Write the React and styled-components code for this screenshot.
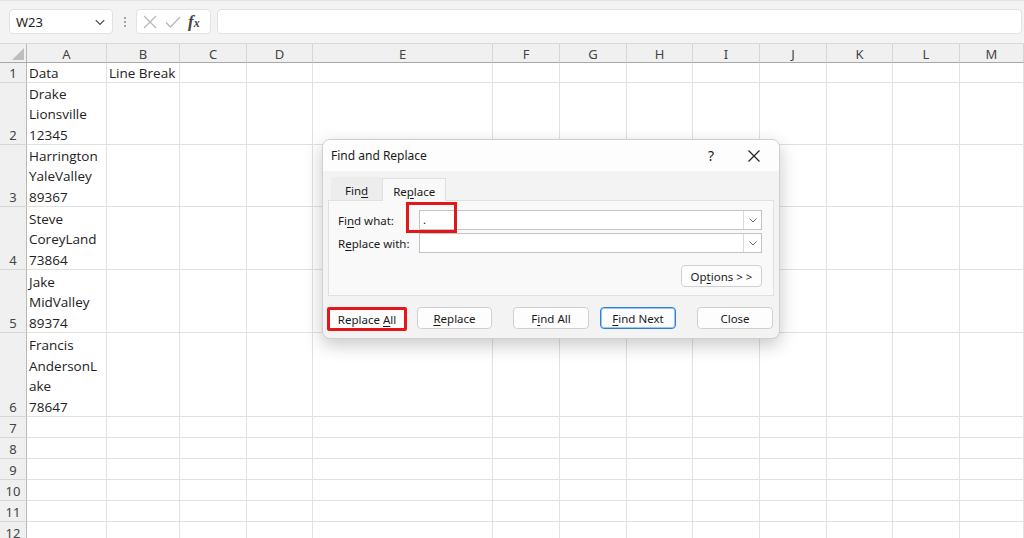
import React from "react";
import styled, { createGlobalStyle, css } from "styled-components";

const GlobalStyle = createGlobalStyle`
  html, body {
    margin: 0;
    padding: 0;
    background: #ffffff;
  }
  body {
    font-family: "Noto Sans", "Open Sans", sans-serif;
    color: #1f1f1f;
  }
`;

const columns = [
  { name: "A", width: 80 },
  { name: "B", width: 73 },
  { name: "C", width: 67 },
  { name: "D", width: 66 },
  { name: "E", width: 180 },
  { name: "F", width: 67 },
  { name: "G", width: 67 },
  { name: "H", width: 66 },
  { name: "I", width: 67 },
  { name: "J", width: 67 },
  { name: "K", width: 66 },
  { name: "L", width: 67 },
  { name: "M", width: 64 },
];

const rows = [
  { n: 1, h: 20, a: ["Data"], b: "Line Break" },
  { n: 2, h: 62, a: ["Drake", "Lionsville", "12345"] },
  { n: 3, h: 62, a: ["Harrington", "YaleValley", "89367"] },
  { n: 4, h: 63, a: ["Steve", "CoreyLand", "73864"] },
  { n: 5, h: 63, a: ["Jake", "MidValley", "89374"] },
  { n: 6, h: 84, a: ["Francis", "AndersonL", "ake", "78647"] },
  { n: 7, h: 21 },
  { n: 8, h: 21 },
  { n: 9, h: 21 },
  { n: 10, h: 21 },
  { n: 11, h: 21 },
  { n: 12, h: 21 },
];

const gridCols = `27px ${columns.map((c) => c.width + "px").join(" ")}`;

const Chevron = ({ size = 10, color = "#666" }) => (
  <svg width={size} height={size} viewBox="0 0 10 10">
    <path d="M1.5 3.5 L5 7 L8.5 3.5" fill="none" stroke={color} strokeWidth="1" />
  </svg>
);

const App = () => {
  return (
    <>
      <GlobalStyle />
      <Page>
        <FormulaBar>
          <NameBox>
            <span>W23</span>
            <Chevron size={12} color="#444" />
          </NameBox>
          <Dots>
            <i />
            <i />
            <i />
          </Dots>
          <FxBox>
            <svg width="16" height="16" viewBox="0 0 16 16">
              <path d="M2 2 L14 14 M14 2 L2 14" stroke="#b9b9b9" strokeWidth="1.3" fill="none" />
            </svg>
            <svg width="18" height="16" viewBox="0 0 18 16">
              <path d="M2 8.5 L6.5 13 L16 3" stroke="#b9b9b9" strokeWidth="1.3" fill="none" />
            </svg>
            <FxText>
              f<sub>x</sub>
            </FxText>
          </FxBox>
          <FormulaInput />
        </FormulaBar>

        <Sheet>
          <Grid>
            <Corner>
              <svg width="12" height="12" viewBox="0 0 12 12">
                <path d="M12 0 L12 12 L0 12 Z" fill="#bdbdbd" />
              </svg>
            </Corner>
            {columns.map((c) => (
              <ColHead key={c.name}>{c.name}</ColHead>
            ))}
            {rows.map((r) => (
              <React.Fragment key={r.n}>
                <RowHead $h={r.h}>
                  <Line>{r.n}</Line>
                </RowHead>
                {columns.map((c, i) => (
                  <Cell key={c.name} $h={r.h}>
                    {i === 0 && r.a && r.a.map((line) => <Line key={line}>{line}</Line>)}
                    {i === 1 && r.b && <Line>{r.b}</Line>}
                  </Cell>
                ))}
              </React.Fragment>
            ))}
          </Grid>

          <Dialog>
            <TitleBar>
              <Title>Find and Replace</Title>
              <TitleButtons>
                <Help>?</Help>
                <svg width="14" height="14" viewBox="0 0 14 14">
                  <path d="M1.5 1.5 L12.5 12.5 M12.5 1.5 L1.5 12.5" stroke="#222" strokeWidth="1.2" fill="none" />
                </svg>
              </TitleButtons>
            </TitleBar>
            <DialogBody>
              <Tabs>
                <Tab>
                  <span>
                    Fin<u>d</u>
                  </span>
                </Tab>
                <Tab $active>
                  <span>
                    Re<u>p</u>lace
                  </span>
                </Tab>
              </Tabs>
              <Panel>
                <FieldRow>
                  <Label>
                    Fi<u>n</u>d what:
                  </Label>
                  <ComboBox>
                    <ComboText>.</ComboText>
                    <ComboArrow>
                      <Chevron />
                    </ComboArrow>
                  </ComboBox>
                  <Highlight />
                </FieldRow>
                <FieldRow>
                  <Label>
                    R<u>e</u>place with:
                  </Label>
                  <ComboBox>
                    <ComboText />
                    <ComboArrow>
                      <Chevron />
                    </ComboArrow>
                  </ComboBox>
                </FieldRow>
                <OptionsRow>
                  <Button $w={81}>
                    <span>
                      Op<u>t</u>ions &gt; &gt;
                    </span>
                  </Button>
                </OptionsRow>
              </Panel>
              <ButtonRow>
                <Button $w={80} $highlight>
                  <span>
                    Replace <u>A</u>ll
                  </span>
                </Button>
                <Button $w={75} $gap={10}>
                  <span>
                    <u>R</u>eplace
                  </span>
                </Button>
                <Button $w={76} $gap={21}>
                  <span>
                    F<u>i</u>nd All
                  </span>
                </Button>
                <Button $w={76} $gap={11} $focused>
                  <span>
                    <u>F</u>ind Next
                  </span>
                </Button>
                <Button $w={76} $gap={21}>
                  <span>Close</span>
                </Button>
              </ButtonRow>
            </DialogBody>
          </Dialog>
        </Sheet>
      </Page>
    </>
  );
};

const Page = styled.div`
  width: 1024px;
  height: 538px;
  overflow: hidden;
  display: flex;
  flex-direction: column;
  background: #ffffff;
`;

const FormulaBar = styled.div`
  height: 44px;
  flex-shrink: 0;
  box-sizing: border-box;
  background: #f3f3f3;
  border-top: 1px solid #e3e3e3;
  border-bottom: 1px solid #d9d9d9;
  display: flex;
  align-items: center;
  padding: 0 2px 1px 9px;
`;

const NameBox = styled.div`
  width: 104px;
  height: 25px;
  box-sizing: border-box;
  background: #ffffff;
  border: 1px solid #e2e2e2;
  border-radius: 4px;
  display: flex;
  align-items: center;
  justify-content: space-between;
  padding: 0 6px 0 6px;
  font-size: 13px;
  color: #222;
`;

const Dots = styled.div`
  width: 23px;
  display: flex;
  flex-direction: column;
  align-items: center;
  gap: 2px;

  i {
    width: 2px;
    height: 2px;
    border-radius: 50%;
    background: #8a8a8a;
  }
`;

const FxBox = styled.div`
  width: 75px;
  height: 25px;
  box-sizing: border-box;
  background: #ffffff;
  border: 1px solid #e2e2e2;
  border-radius: 4px;
  display: flex;
  align-items: center;
  gap: 6px;
  padding-left: 5px;
`;

const FxText = styled.span`
  font-family: "Liberation Serif", serif;
  font-style: italic;
  font-weight: bold;
  font-size: 17px;
  color: #444;
  line-height: 1;

  sub {
    font-size: 12px;
    vertical-align: baseline;
  }
`;

const FormulaInput = styled.div`
  flex: 1;
  margin-left: 6px;
  height: 25px;
  box-sizing: border-box;
  background: #ffffff;
  border: 1px solid #e2e2e2;
  border-radius: 4px;
`;

const Sheet = styled.div`
  position: relative;
  flex: 1;
  min-height: 0;
`;

const Grid = styled.div`
  display: grid;
  grid-template-columns: ${gridCols};
  grid-auto-rows: min-content;
`;

const headCell = css`
  background: #f0f0f0;
  box-sizing: border-box;
  color: #444;
  font-size: 13px;
  display: flex;
  justify-content: center;
`;

const Corner = styled.div`
  ${headCell};
  height: 19px;
  align-items: flex-end;
  justify-content: flex-end;
  padding: 0 2px 2px 0;
  border-right: 1px solid #b8b8b8;
  border-bottom: 1px solid #a8a8a8;
`;

const ColHead = styled.div`
  ${headCell};
  height: 19px;
  align-items: center;
  padding-top: 1px;
  border-right: 1px solid #d6d6d6;
  border-bottom: 1px solid #a8a8a8;
`;

const RowHead = styled.div`
  ${headCell};
  height: ${(p) => p.$h}px;
  flex-direction: column;
  align-items: center;
  justify-content: flex-end;
  border-right: 1px solid #b8b8b8;
  border-bottom: 1px solid #d6d6d6;
`;

const Cell = styled.div`
  height: ${(p) => p.$h}px;
  box-sizing: border-box;
  border-right: 1px solid #e1e1e1;
  border-bottom: 1px solid #e1e1e1;
  display: flex;
  flex-direction: column;
  justify-content: flex-end;
  padding-left: 2px;
  overflow: visible;
  white-space: nowrap;
  font-family: "Open Sans", sans-serif;
  font-size: 13.5px;
  color: #222;
`;

const Line = styled.div`
  line-height: 20.8px;
  transform: translateY(2px);
`;

const Dialog = styled.div`
  position: absolute;
  left: 322px;
  top: 95px;
  width: 458px;
  height: 200px;
  box-sizing: border-box;
  background: #f3f3f3;
  border: 1px solid #cfcfcf;
  border-radius: 8px;
  box-shadow: 0 6px 18px rgba(0, 0, 0, 0.22);
  overflow: hidden;
  display: flex;
  flex-direction: column;
  font-family: "Noto Sans", "Open Sans", sans-serif;
  font-size: 11.5px;
  color: #1a1a1a;

  u {
    text-decoration-thickness: 1px;
    text-underline-offset: 2px;
  }
`;

const TitleBar = styled.div`
  height: 31px;
  background: #fdfdfd;
  display: flex;
  align-items: center;
  justify-content: space-between;
  padding: 0 18px 0 8px;
  flex-shrink: 0;
`;

const Title = styled.div`
  font-size: 12px;
`;

const TitleButtons = styled.div`
  display: flex;
  align-items: center;
  gap: 33px;
`;

const Help = styled.div`
  font-size: 14px;
`;

const DialogBody = styled.div`
  padding: 6px 5px 0 5px;
  display: flex;
  flex-direction: column;
`;

const Tabs = styled.div`
  display: flex;
  padding-left: 3px;
  height: 23px;
`;

const Tab = styled.div`
  box-sizing: border-box;
  height: 23px;
  padding: 2px ${(p) => (p.$active ? "10px" : "13px")} 0;
  display: flex;
  align-items: center;
  background: ${(p) => (p.$active ? "#f9f9f9" : "#ededed")};
  border: 1px solid ${(p) => (p.$active ? "#e0e0e0" : "transparent")};
  border-bottom: none;
  position: relative;
  top: ${(p) => (p.$active ? "1px" : "0")};
  z-index: ${(p) => (p.$active ? 1 : 0)};
`;

const Panel = styled.div`
  height: 96px;
  box-sizing: border-box;
  background: #f9f9f9;
  border: 1px solid #e0e0e0;
  padding: 9px 11px 0 9px;
  display: flex;
  flex-direction: column;
  gap: 3px;
`;

const FieldRow = styled.div`
  position: relative;
  display: flex;
  align-items: center;
  height: 20px;
`;

const Label = styled.div`
  width: 81px;
  flex-shrink: 0;
`;

const ComboBox = styled.div`
  flex: 1;
  height: 20px;
  box-sizing: border-box;
  background: #ffffff;
  border: 1px solid #c4c4c4;
  display: flex;
`;

const ComboText = styled.div`
  flex: 1;
  padding-left: 3px;
  line-height: 18px;
`;

const ComboArrow = styled.div`
  width: 17px;
  border-left: 1px solid #dadada;
  display: flex;
  align-items: center;
  justify-content: center;
`;

const Highlight = styled.div`
  position: absolute;
  left: 68px;
  top: -8px;
  width: 51px;
  height: 31px;
  box-sizing: border-box;
  border: 3px solid #e4161b;
`;

const OptionsRow = styled.div`
  display: flex;
  justify-content: flex-end;
  margin-top: 9px;
`;

const Button = styled.div`
  width: ${(p) => p.$w}px;
  height: 22px;
  margin-left: ${(p) => p.$gap || 0}px;
  box-sizing: border-box;
  background: #fdfdfd;
  border: 1px solid #d0d0d0;
  border-radius: 4px;
  display: flex;
  align-items: center;
  justify-content: center;
  font-size: 11.5px;
  white-space: pre;

  ${(p) =>
    p.$focused &&
    css`
      border-color: #2a7fd4;
      box-shadow: inset 0 0 0 1px #9cc6ee;
    `}

  ${(p) =>
    p.$highlight &&
    css`
      height: 24px;
      border: 3px solid #e4161b;
      border-radius: 2px;
      margin-left: -1px;
      padding-top: 1px;
    `}
`;

const ButtonRow = styled.div`
  display: flex;
  align-items: flex-start;
  margin-top: 11px;
`;

export default App;
